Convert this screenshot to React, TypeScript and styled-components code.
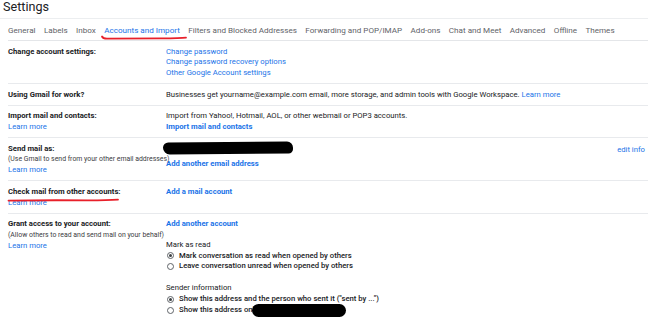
import React, { type FC, type ReactNode } from 'react'
import styled, { createGlobalStyle } from 'styled-components'

const GlobalStyle = createGlobalStyle`
	html, body {
		margin: 0;
		padding: 0;
		background: #fff;
	}
	body {
		font-family: Roboto, 'Liberation Sans', Arial, sans-serif;
		color: #202124;
		width: 648px;
		height: 320px;
		overflow: hidden;
	}
`

const Page = styled.div`
	position: relative;
	width: 648px;
	height: 320px;
	overflow: hidden;
`

const Title = styled.h1`
	margin: 0;
	padding: 0 0 0 3px;
	font-size: 12.6px;
	line-height: 13px;
	font-weight: 400;
	color: #202124;
	border-bottom: 1px solid #eceef0;
	box-sizing: border-box;
	height: 19px;
`

const Tabs = styled.nav`
	display: flex;
	gap: 8.4px;
	margin-left: 8px;
	height: 21px;
	align-items: center;
	border-bottom: 1px solid #e4e6e9;
`

const Tab = styled.span<{ $active?: boolean }>`
	font-size: 8.1px;
	line-height: 10px;
	color: ${({ $active }) => ($active ? '#1a73e8' : '#5f6368')};
	white-space: nowrap;
	padding-top: 1px;
`

const Row = styled.section`
	display: grid;
	grid-template-columns: 158px 1fr auto;
	margin-left: 8px;
	padding: 5.5px 3px 4.5px 0;
	border-bottom: 1px solid #e8eaed;
	font-size: 7.7px;
	line-height: 10.7px;
`

const Label = styled.div`
	position: relative;
	display: flex;
	flex-direction: column;
`

const LabelTitle = styled.div`
	font-weight: 700;
	color: #202124;
`

const Note = styled.div`
	font-size: 6.9px;
	color: #3c4043;
	white-space: nowrap;
`

const Link = styled.a<{ $bold?: boolean }>`
	display: block;
	color: #1a73e8;
	font-weight: ${({ $bold }) => ($bold ? 700 : 400)};
	text-decoration: none;
	white-space: nowrap;
`

const InlineLink = styled.a`
	color: #1a73e8;
	text-decoration: none;
`

const Value = styled.div`
	display: flex;
	flex-direction: column;
	white-space: nowrap;
`

const Side = styled.div`
	padding-top: 1px;
`

const Redaction = styled.div`
	width: 130px;
	height: 12px;
	margin: -1.5px 0 4.5px -3px;
	background: #000;
	border-radius: 7px 8px 6px 9px;
	transform: rotate(-0.5deg);
`

const InlineRedaction = styled.span`
	display: inline-block;
	width: 94px;
	height: 13px;
	margin-left: -3px;
	vertical-align: -5px;
	background: #000;
	border-radius: 7px;
`

const Group = styled.div<{ $gap: number }>`
	margin-top: ${({ $gap }) => $gap}px;
	display: flex;
	flex-direction: column;
`

const GroupTitle = styled.div`
	color: #202124;
`

const Option = styled.label`
	display: flex;
	align-items: center;
	gap: 5px;
	color: #202124;
	font-weight: 500;
`

const Radio = styled.span<{ $checked?: boolean }>`
	box-sizing: border-box;
	width: 7px;
	height: 7px;
	margin-left: 1px;
	border-radius: 50%;
	border: 1px solid #5f6368;
	display: inline-flex;
	align-items: center;
	justify-content: center;

	&::after {
		content: '';
		width: 3px;
		height: 3px;
		border-radius: 50%;
		background: ${({ $checked }) => ($checked ? '#3c4043' : 'transparent')};
	}
`

const Scribble = styled.svg`
	position: absolute;
	pointer-events: none;
	overflow: visible;
`

const tabs = [
	'General',
	'Labels',
	'Inbox',
	'Accounts and Import',
	'Filters and Blocked Addresses',
	'Forwarding and POP/IMAP',
	'Add-ons',
	'Chat and Meet',
	'Advanced',
	'Offline',
	'Themes',
]

type SettingRowProps = {
	label: ReactNode
	children: ReactNode
	side?: ReactNode
}

const SettingRow: FC<SettingRowProps> = ({ label, children, side }) => (
	<Row>
		<Label>{label}</Label>
		<Value>{children}</Value>
		<Side>{side}</Side>
	</Row>
)

const RadioOption: FC<{ checked?: boolean; children: ReactNode }> = ({ checked, children }) => (
	<Option>
		<Radio $checked={checked} />
		<span>{children}</span>
	</Option>
)

export default function App() {
	return (
		<Page>
			<GlobalStyle />
			<Title>Settings</Title>
			<Tabs>
				{tabs.map((tab) => (
					<Tab key={tab} $active={tab === 'Accounts and Import'}>
						{tab}
					</Tab>
				))}
			</Tabs>
			<Scribble
				style={{ left: 101, top: 35, width: 88, height: 6 }}
				viewBox='0 0 88 6'
			>
				<path
					d='M1 1.5 Q2 3.6 6 3.6 L60 3.4 Q80 3.2 85 2.6'
					fill='none'
					stroke='#e8202a'
					strokeWidth='1.8'
					strokeLinecap='round'
				/>
			</Scribble>

			<SettingRow label={<LabelTitle>Change account settings:</LabelTitle>}>
				<Link>Change password</Link>
				<Link>Change password recovery options</Link>
				<Link>Other Google Account settings</Link>
			</SettingRow>

			<SettingRow label={<LabelTitle>Using Gmail for work?</LabelTitle>}>
				<div>
					Businesses get yourname@example.com email, more storage, and admin tools with Google
					Workspace. <InlineLink>Learn more</InlineLink>
				</div>
			</SettingRow>

			<SettingRow
				label={
					<>
						<LabelTitle>Import mail and contacts:</LabelTitle>
						<Link>Learn more</Link>
					</>
				}
			>
				<div>Import from Yahoo!, Hotmail, AOL, or other webmail or POP3 accounts.</div>
				<Link $bold>Import mail and contacts</Link>
			</SettingRow>

			<SettingRow
				label={
					<>
						<LabelTitle>Send mail as:</LabelTitle>
						<Note>(Use Gmail to send from your other email addresses)</Note>
						<Link>Learn more</Link>
					</>
				}
				side={<Link>edit info</Link>}
			>
				<Redaction />
				<Link $bold>Add another email address</Link>
			</SettingRow>

			<SettingRow
				label={
					<>
						<LabelTitle>Check mail from other accounts:</LabelTitle>
						<Link>Learn more</Link>
						<Scribble
							style={{ left: 0, top: 11, width: 112, height: 5 }}
							viewBox='0 0 112 5'
						>
							<path
								d='M0.5 2.6 Q40 2 80 2.4 Q100 2.4 110 1.6'
								fill='none'
								stroke='#e8202a'
								strokeWidth='1.8'
								strokeLinecap='round'
							/>
						</Scribble>
					</>
				}
			>
				<Link $bold>Add a mail account</Link>
			</SettingRow>

			<SettingRow
				label={
					<>
						<LabelTitle>Grant access to your account:</LabelTitle>
						<Note>(Allow others to read and send mail on your behalf)</Note>
						<Link>Learn more</Link>
					</>
				}
			>
				<Link $bold>Add another account</Link>
				<Group $gap={10}>
					<GroupTitle>Mark as read</GroupTitle>
					<RadioOption checked>Mark conversation as read when opened by others</RadioOption>
					<RadioOption>Leave conversation unread when opened by others</RadioOption>
				</Group>
				<Group $gap={11}>
					<GroupTitle>Sender information</GroupTitle>
					<RadioOption checked>Show this address and the person who sent it ("sent by ...")</RadioOption>
					<RadioOption>
						Show this address onl
						<InlineRedaction />
					</RadioOption>
				</Group>
			</SettingRow>
		</Page>
	)
}
